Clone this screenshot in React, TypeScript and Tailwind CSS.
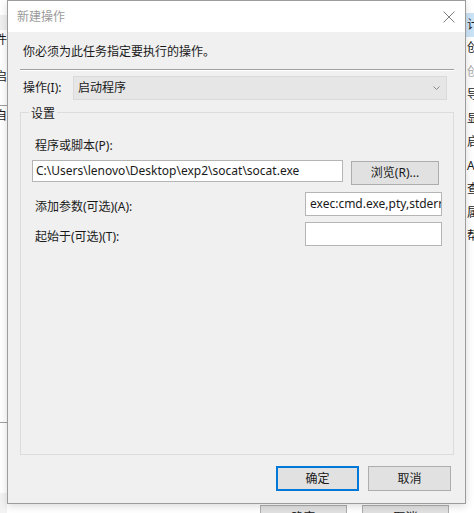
import React from 'react'

const font = 'font-["Noto_Sans","Noto_Sans_CJK_SC",sans-serif]'

const rightItems = [
  { t: '计', c: 'text-[#1a1a1a]' },
  { t: '创', c: 'text-[#1a1a1a]' },
  { t: '创', c: 'text-[#a8a8a8]' },
  { t: '导', c: 'text-[#1a1a1a]' },
  { t: '显', c: 'text-[#1a1a1a]' },
  { t: '启', c: 'text-[#1a1a1a]' },
  { t: 'A', c: 'text-[#1a1a1a]' },
  { t: '查', c: 'text-[#1a1a1a]' },
  { t: '属', c: 'text-[#1a1a1a]' },
  { t: '帮', c: 'text-[#1a1a1a]' },
]

const Background: React.FC = () => {
  return (
    <div className="flex h-full w-full">
      {/* left edge of the window behind */}
      <div className="w-[7px] overflow-hidden flex flex-col text-[12px] text-[#1a1a1a] leading-[16px]">
        <div className="h-[15px]" />
        <div className="h-[15px] bg-[#f0f0f0]" />
        <div className="h-[16px] mt-[2px] -ml-[5px] whitespace-nowrap">件</div>
        <div className="h-[16px] mt-[21px] -ml-[5px] whitespace-nowrap">启</div>
        <div className="h-px mt-[20px] bg-[#a0a0a0]" />
        <div className="h-[16px] mt-[2px] -ml-[5px] whitespace-nowrap">自</div>
        <div className="h-px mt-[298px] bg-[#a0a0a0]" />
        <div className="flex-1" />
        <div className="h-[20px] bg-[#f3f3f3]" />
      </div>

      {/* middle: only the bottom buttons of the window behind peek out */}
      <div className="flex-1 flex flex-col">
        <div className="flex-1" />
        <div className="h-[8px] overflow-hidden flex text-[12px] text-[#1a1a1a]">
          <div className="w-[253px]" />
          <div className="w-[87px] h-[25px] border border-[#adadad] bg-[#e1e1e1] flex items-center justify-center">确定</div>
          <div className="w-[15px]" />
          <div className="w-[87px] h-[25px] border border-[#adadad] bg-[#e1e1e1] flex items-center justify-center">取消</div>
        </div>
      </div>

      {/* right pane of the window behind */}
      <div className="w-[8px] overflow-hidden flex flex-col text-[12px] leading-[16px]">
        <div className="h-[13px]" />
        {rightItems.map((it, i) => (
          <div
            key={i}
            className={`h-[23.5px] flex items-center pl-[1px] whitespace-nowrap ${it.c} ${i === 0 ? 'bg-[#cce4f7]' : ''}`}
          >
            {it.t}
          </div>
        ))}
      </div>
    </div>
  )
}

const Dialog: React.FC = () => {
  return (
    <div className="absolute left-[7px] top-0 w-[459px] h-[504px] border border-[#9c9c9c] bg-[#f0f0f0] flex flex-col shadow-[0_2px_8px_rgba(0,0,0,0.15)]">
      {/* title bar */}
      <div className="h-[31px] bg-white flex items-center justify-between pl-[9px] pr-[10px]">
        <span className="text-[12px] text-[#9a9a9a]">新建操作</span>
        <svg width="12" height="12" viewBox="0 0 12 12" className="mt-[1px]">
          <path d="M0.5 0.5 L11.5 11.5 M11.5 0.5 L0.5 11.5" stroke="#808080" strokeWidth="1" fill="none" />
        </svg>
      </div>

      <div className="flex-1 flex flex-col pt-[10px] text-[12px] text-[#1a1a1a]">
        <div className="h-[20px] leading-[20px] pl-[15px]">你必须为此任务指定要执行的操作。</div>

        <div className="h-[2px] mt-[7px] ml-[12px] mr-[11px] border-t border-[#a0a0a0] border-b border-b-white" />

        <div className="mt-[5px] flex items-center pl-[15px]">
          <div className="w-[50px]">操作(I):</div>
          <div className="w-[374px] h-[24px] bg-[#e6e6e6] border border-[#dadada] flex items-center justify-between pl-[4px] pr-[6px]">
            <span>启动程序</span>
            <svg width="7" height="4" viewBox="0 0 7 4">
              <path d="M0.5 0.5 L3.5 3.5 L6.5 0.5" stroke="#8a8a8a" strokeWidth="1" fill="none" />
            </svg>
          </div>
        </div>

        {/* 设置 group */}
        <div className="mt-[12px] ml-[12px] mr-[11px] h-[343px] border border-[#dcdcdc] flex flex-col pl-[11px] pr-[11px]">
          <div className="-mt-[7px] -ml-[3px] self-start bg-[#f0f0f0] px-[2px] h-[16px] leading-[16px]">设置</div>

          <div className="mt-[16px] ml-[3px] h-[16px] leading-[16px]">程序或脚本(P):</div>
          <div className="mt-[6px] flex items-start">
            <div className="w-[311px] h-[22px] bg-white border border-[#b5b5b5] flex items-center pl-[3px] whitespace-nowrap overflow-hidden">
              C:\Users\lenovo\Desktop\exp2\socat\socat.exe
            </div>
            <div className="ml-[8px] mt-[1px] w-[88px] h-[24px] bg-[#e1e1e1] border border-[#adadad] flex items-center justify-center">
              浏览(R)...
            </div>
          </div>

          <div className="mt-[7px] flex items-center justify-between">
            <div className="ml-[3px] mt-[6px]">添加参数(可选)(A):</div>
            <div className="w-[137px] h-[24px] bg-white border border-[#b5b5b5] flex items-center pl-[4px] whitespace-nowrap overflow-hidden">
              exec:cmd.exe,pty,stderr
            </div>
          </div>

          <div className="mt-[6px] flex items-center justify-between">
            <div className="ml-[3px] mt-[6px]">起始于(可选)(T):</div>
            <div className="w-[137px] h-[24px] bg-white border border-[#b5b5b5]" />
          </div>
        </div>

        <div className="mt-[11px] flex justify-end gap-[9px] pr-[14px]">
          <div className="w-[83px] h-[25px] bg-[#e1e1e1] border-2 border-[#0078d7] flex items-center justify-center">确定</div>
          <div className="w-[83px] h-[25px] bg-[#e1e1e1] border border-[#adadad] flex items-center justify-center">取消</div>
        </div>
      </div>
    </div>
  )
}

const App: React.FC = () => {
  return (
    <div className={`relative w-[474px] h-[513px] overflow-hidden bg-white ${font}`}>
      <Background />
      <Dialog />
    </div>
  )
}

export default App
